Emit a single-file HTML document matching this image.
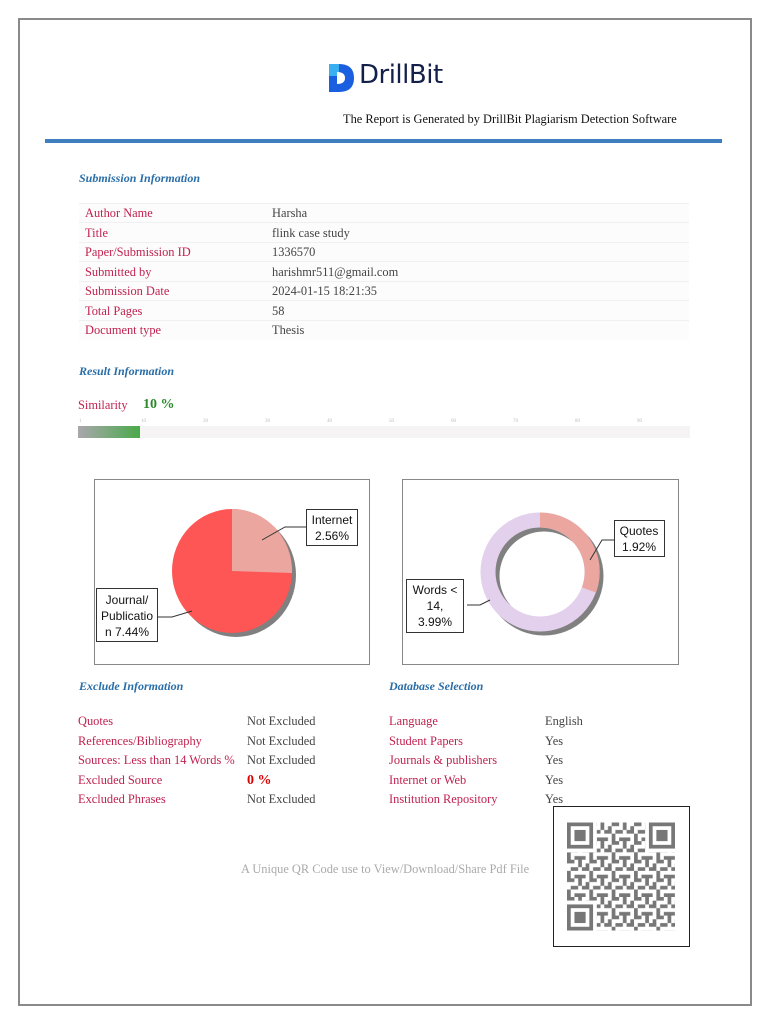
<!DOCTYPE html>
<html><head><meta charset="utf-8"><style>
body{margin:0;width:768px;height:1024px;background:#fff;position:relative;font-family:"Liberation Serif",serif;overflow:hidden}
.frame{position:absolute;left:18px;top:18px;width:730px;height:984px;border:2px solid #8a8a8a}
.abs{position:absolute;white-space:nowrap}
.h{color:#2a6ea8;font-style:italic;font-weight:bold;font-size:12px}
.r{color:#c0224f;font-size:12.4px}
.v{color:#444;font-size:12.4px}
.row{position:absolute;left:79px;width:610px;height:19px;border-top:1px solid #f0f0f0;background:#fcfcfc}
</style></head><body>
<div class="frame"></div>
<svg class="abs" style="left:327px;top:62px" width="28" height="32" viewBox="0 0 28 32"><path d="M2 2 L12 2 Q27 2 27 16 Q27 30 12 30 L2 30 Z" fill="#1a5fe0"/><path d="M2 2 L12 2 L12 14 L2 14 Z" fill="#3ab0f0"/><path d="M10 10 Q18 10 18 16 Q18 22 10 22 Z" fill="#fff"/></svg>
<div class="abs" style="left:359px;top:60px;font-family:'DejaVu Sans',sans-serif;font-size:26px;color:#15204a;letter-spacing:-0.5px">DrillBit</div>
<div class="abs" style="left:343px;top:112px;font-size:12.4px;color:#111">The Report is Generated by DrillBit Plagiarism Detection Software</div>
<div class="abs" style="left:45px;top:139px;width:677px;height:4px;background:#3f7fbf"></div>
<div class="abs h" style="left:79px;top:171px">Submission Information</div>
<div class="row" style="top:203px"></div><div class="row" style="top:222px"></div><div class="row" style="top:242px"></div><div class="row" style="top:261px"></div><div class="row" style="top:281px"></div><div class="row" style="top:300px"></div><div class="row" style="top:320px"></div>
<div class="abs r" style="left:85px;top:204px;line-height:19.5px">Author Name<br>Title<br>Paper/Submission ID<br>Submitted by<br>Submission Date<br>Total Pages<br>Document type</div>
<div class="abs v" style="left:272px;top:204px;line-height:19.5px">Harsha<br>flink case study<br>1336570<br>harishmr511@gmail.com<br>2024-01-15 18:21:35<br>58<br>Thesis</div>
<div class="abs h" style="left:79px;top:364px">Result Information</div>
<div class="abs r" style="left:78px;top:398px">Similarity</div>
<div class="abs" style="left:143px;top:397px;color:#2a8a2a;font-weight:bold;font-size:14px">10 %</div>
<div class="abs" style="left:79px;top:419px;width:560px;font-size:5px;color:#bbb">
<span class="abs" style="left:0">1</span><span class="abs" style="left:62px">10</span><span class="abs" style="left:124px">20</span><span class="abs" style="left:186px">30</span><span class="abs" style="left:248px">40</span><span class="abs" style="left:310px">50</span><span class="abs" style="left:372px">60</span><span class="abs" style="left:434px">70</span><span class="abs" style="left:496px">80</span><span class="abs" style="left:558px">90</span></div>
<div class="abs" style="left:78px;top:426px;width:612px;height:12px;background:#f5f3f4"></div>
<div class="abs" style="left:78px;top:426px;width:62px;height:12px;background:linear-gradient(90deg,#aaa6ad,#4aaa4a)"></div>
<svg class="abs" style="left:0;top:0" width="768" height="700">
<rect x="94.5" y="479.5" width="275" height="185" fill="#fff" stroke="#888"/>
<rect x="402.5" y="479.5" width="276" height="185" fill="#fff" stroke="#888"/>
<ellipse cx="236" cy="575" rx="60" ry="62" fill="#808080"/>
<ellipse cx="232" cy="571" rx="60" ry="62" fill="#fe5555"/>
<path d="M232 571 L232 509 A60 62 0 0 1 292 573 Z" fill="#eba6a0"/>
<circle cx="544" cy="576" r="52" fill="none" stroke="#808080" stroke-width="15"/>
<circle cx="540" cy="572" r="52" fill="none" stroke="#e3d0ec" stroke-width="15"/>
<path d="M540 520 A52 52 0 0 1 589 590" fill="none" stroke="#eba6a0" stroke-width="15"/>
<g stroke="#333" fill="none"><path d="M262 540 L285 527 L307 527"/><path d="M192 611 L172 617 L157 617"/><path d="M590 560 L602 540 L614 540"/><path d="M490 600 L480 605 L467 605"/></g>
<g fill="#fff" stroke="#333"><rect x="306.5" y="509.5" width="51" height="36"/><rect x="96.5" y="588.5" width="61" height="53"/><rect x="614.5" y="520.5" width="50" height="36"/><rect x="406.5" y="579.5" width="57" height="53"/></g>
<g font-family="Liberation Sans,sans-serif" font-size="12" fill="#111" text-anchor="middle">
<text x="332" y="524">Internet</text><text x="332" y="540">2.56%</text>
<text x="127" y="604">Journal/</text><text x="127" y="620">Publicatio</text><text x="127" y="636">n 7.44%</text>
<text x="639" y="535">Quotes</text><text x="639" y="551">1.92%</text>
<text x="435" y="594">Words &lt;</text><text x="435" y="610">14,</text><text x="435" y="626">3.99%</text></g>
</svg>
<div class="abs h" style="left:79px;top:679px">Exclude Information</div>
<div class="abs h" style="left:389px;top:679px">Database Selection</div>
<div class="abs r" style="left:78px;top:712px;line-height:19.5px">Quotes<br>References/Bibliography<br>Sources: Less than 14 Words %<br>Excluded Source<br>Excluded Phrases</div>
<div class="abs v" style="left:247px;top:712px;line-height:19.5px">Not Excluded<br>Not Excluded<br>Not Excluded<br><b style="color:#d00;font-size:14px">0 %</b><br>Not Excluded</div>
<div class="abs r" style="left:389px;top:712px;line-height:19.5px">Language<br>Student Papers<br>Journals &amp; publishers<br>Internet or Web<br>Institution Repository</div>
<div class="abs v" style="left:545px;top:712px;line-height:19.5px">English<br>Yes<br>Yes<br>Yes<br>Yes</div>
<div class="abs" style="left:241px;top:862px;font-size:12.4px;color:#aaa">A Unique QR Code use to View/Download/Share Pdf File</div>
<div class="abs" style="left:553px;top:806px;width:135px;height:139px;border:1px solid #222;background:#fff"></div>
<svg class="abs" style="left:567px;top:820px" width="108" height="113" viewBox="0 0 29 29">
<defs><pattern id="q" width="6" height="5" patternUnits="userSpaceOnUse"><path d="M0 0h2v1H0zM3 0h1v2H3zM5 1h1v2H5zM1 2h2v1H1zM0 3h1v2H0zM2 4h3v1H2zM4 2h1v1H4z" fill="#777"/></pattern></defs>
<rect width="29" height="29" fill="url(#q)"/>
<g fill="#fff"><rect width="8" height="8"/><rect x="21" width="8" height="8"/><rect y="21" width="8" height="8"/></g>
<g fill="none" stroke="#777"><rect x="0.5" y="0.5" width="6" height="6"/><rect x="22.5" y="0.5" width="6" height="6"/><rect x="0.5" y="22.5" width="6" height="6"/></g>
<g fill="#777"><rect x="2" y="2" width="3" height="3"/><rect x="24" y="2" width="3" height="3"/><rect x="2" y="24" width="3" height="3"/></g>
</svg>
</body></html>
